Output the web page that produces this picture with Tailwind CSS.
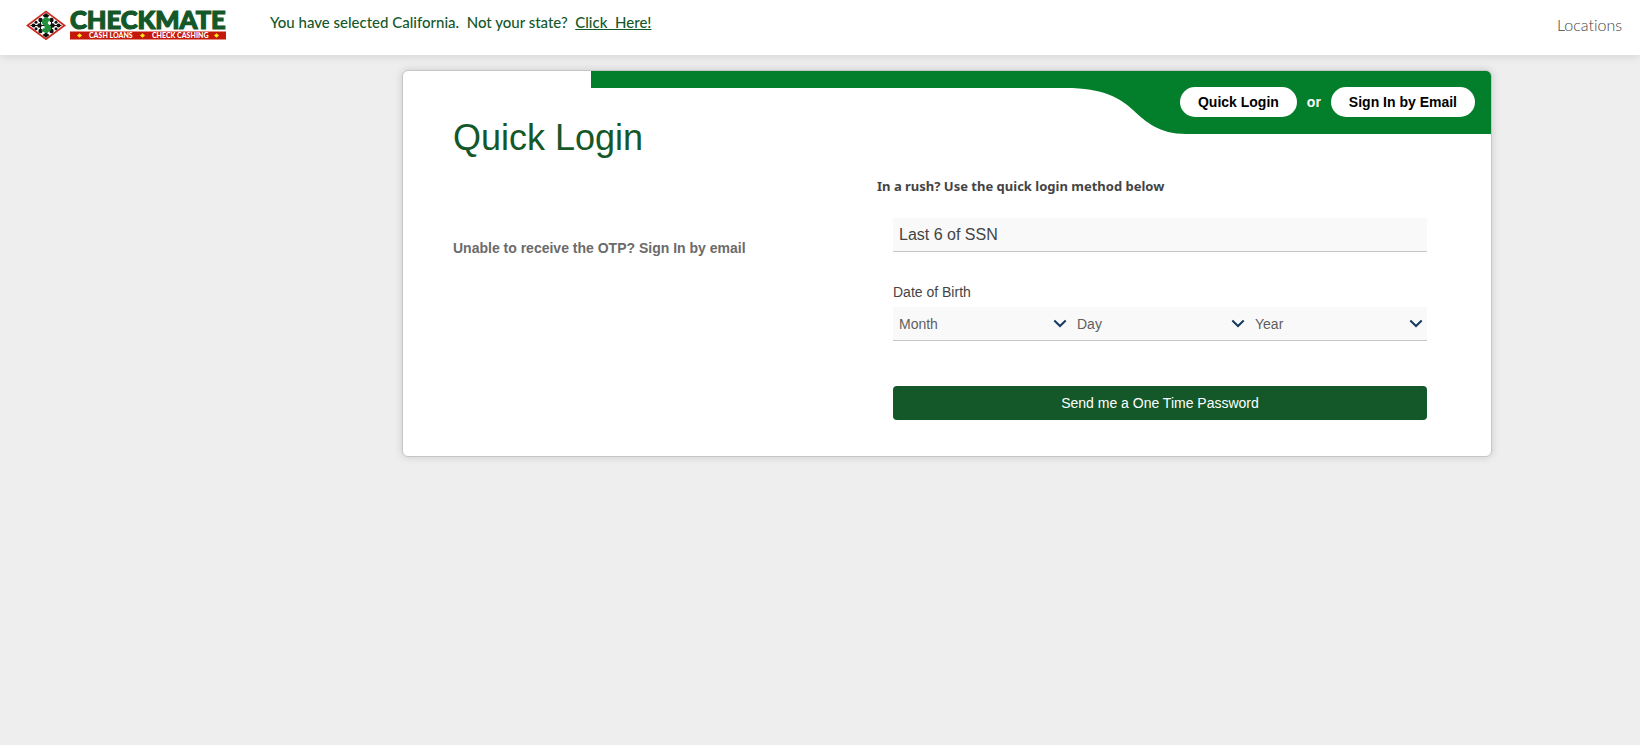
<!DOCTYPE html>
<html lang="en">
<head>
<meta charset="utf-8">
<meta name="viewport" content="width=device-width, initial-scale=1">
<title>Checkmate - Quick Login</title>
<script src="https://cdn.jsdelivr.net/npm/@tailwindcss/browser@4"></script>
</head>
<body class="min-h-screen bg-[#eeeeee] font-['Liberation_Sans',Arial,sans-serif] text-sm text-[#444444]">

<header class="relative flex h-[55px] items-start bg-white pl-6 pr-[18px] shadow-[0_2px_8px_rgba(0,0,0,0.1)] font-[Lato,sans-serif] [font-variant-ligatures:none]">
  <a href="#" aria-label="Checkmate home" class="block">
    <svg class="block h-[46px] w-[208px]" viewBox="24 0 208 46">
      <path d="M46 10.500 66 25.500 46 40.200 26 25.500Z" fill="#cc2a1e"/>
      <path d="M46 12.600 63 25.500 46 38.100 29 25.500Z" fill="#fff"/>
      <g fill="#111">
        <path d="M46 13 49.500 15.700 46 18.400 42.500 15.700Z"/>
        <path d="M46 32.400 49.500 35.100 46 37.800 42.500 35.100Z"/>
        <circle cx="40.500" cy="20" r="2.200"/><circle cx="51.500" cy="20" r="2.200"/>
        <circle cx="36" cy="22.200" r="1.500"/><circle cx="56" cy="22.200" r="1.500"/>
        <circle cx="33.500" cy="25.500" r="2"/><circle cx="58.500" cy="25.500" r="2"/>
        <circle cx="36" cy="28.800" r="1.500"/><circle cx="56" cy="28.800" r="1.500"/>
        <circle cx="39.500" cy="25.500" r="2.300"/><circle cx="52.500" cy="25.500" r="2.300"/>
        <circle cx="40.500" cy="31" r="2.200"/><circle cx="51.500" cy="31" r="2.200"/>
        <path d="M30.500 25h31v1H30.500ZM40 19h1v12h-1ZM51 19h1v12h-1Z"/>
      </g>
      <path d="M49.500 20.800C48 18.800 43.500 18.800 43.500 21.800 43.500 25.500 49.500 24.500 49.500 28 49.500 31.200 44.500 31.200 42.500 29.200M46.200 17V33" fill="none" stroke="#23903c" stroke-width="3.400"/>
      <text x="70" y="28.500" font-family="Lato, sans-serif" font-weight="900" font-size="25.500" fill="#14582a" stroke="#14582a" stroke-width="1.200">CHECKMATE</text>
      <path d="M70 31.500h156v8H70Z" fill="#c41808"/>
      <g fill="#ffe81a">
        <path d="M79.500 33.200 82 35.500 79.500 37.800 77 35.500Z"/>
        <path d="M142.500 33.200 145 35.500 142.500 37.800 140 35.500Z"/>
        <path d="M216.500 33.200 219 35.500 216.500 37.800 214 35.500Z"/>
      </g>
      <g font-family="Lato, sans-serif" font-weight="900" font-size="7" fill="#fff">
        <text x="89" y="38">CASH LOANS</text>
        <text x="152" y="38">CHECK CASHING</text>
      </g>
    </svg>
  </a>
  <p class="ml-[38px] mt-2.5 whitespace-pre text-[15px] leading-6 font-medium text-[#14582a]">You have selected California.  Not your state?  <a href="#" class="underline">Click  Here!</a></p>
  <nav class="ml-auto mt-[13px]"><a href="#" class="text-base leading-6 font-light text-[#444444]">Locations</a></nav>
</header>

<main class="ml-[402px] mr-[148px] mt-[15px] rounded-md border border-[#c6c6c6] bg-white pb-9 shadow-[0_0_8px_rgba(0,0,0,0.15)]">
  <div class="relative flex items-start justify-between overflow-hidden rounded-t-[5px]">
    <svg class="absolute right-0 top-0 h-[63px] w-[900px]" viewBox="0 0 900 63" aria-hidden="true">
      <path d="M0 0H900V63H595C568 63 555 51 542 39S512 17 475 17H0Z" fill="#037f2b"/>
    </svg>
    <h1 class="pl-[50px] pt-[47px] text-4xl leading-10 text-[#14582a]">Quick Login</h1>
    <div class="relative flex items-center pr-4 pt-4 font-bold">
      <button type="button" class="h-[30px] rounded-full bg-white px-[18px] text-black">Quick Login</button>
      <span class="px-2.5 text-white">or</span>
      <button type="button" class="h-[30px] rounded-full bg-white px-[18px] text-black">Sign In by Email</button>
    </div>
  </div>

  <div class="grid grid-cols-[424fr_550fr] pl-[50px] pr-16">
    <p class="pt-20 leading-5 font-bold text-[#6b6b6b]">Unable to receive the OTP? Sign In by email</p>
    <form class="pt-[18px]">
      <p class="font-['Noto_Sans',sans-serif] text-[13px] leading-5 font-bold">In a rush? Use the quick login method below</p>
      <div class="pl-4 pt-[22px]">
        <input type="text" aria-label="Last 6 of SSN" placeholder="Last 6 of SSN" class="block h-[34px] w-full border-b border-[#c6c6c6] bg-[#f9f9f9] px-1.5 text-base placeholder:text-[#444444]">
        <fieldset class="mt-[30px]">
          <legend class="leading-5">Date of Birth</legend>
          <div class="mt-[5px] grid grid-cols-3 border-b border-[#c6c6c6] bg-[#f9f9f9] text-[#5f5f5f]">
            <div class="relative">
              <select aria-label="Month" class="block h-[33px] w-full appearance-none pl-1.5"><option>Month</option></select>
              <svg class="pointer-events-none absolute right-1 top-3 h-2.5 w-3.5" viewBox="0 0 14 10" fill="none" stroke="#163a5f" stroke-width="2"><path d="M1.300 1.500 7 7 12.700 1.500"/></svg>
            </div>
            <div class="relative">
              <select aria-label="Day" class="block h-[33px] w-full appearance-none pl-1.5"><option>Day</option></select>
              <svg class="pointer-events-none absolute right-1 top-3 h-2.5 w-3.5" viewBox="0 0 14 10" fill="none" stroke="#163a5f" stroke-width="2"><path d="M1.300 1.500 7 7 12.700 1.500"/></svg>
            </div>
            <div class="relative">
              <select aria-label="Year" class="block h-[33px] w-full appearance-none pl-1.5"><option>Year</option></select>
              <svg class="pointer-events-none absolute right-1 top-3 h-2.5 w-3.5" viewBox="0 0 14 10" fill="none" stroke="#163a5f" stroke-width="2"><path d="M1.300 1.500 7 7 12.700 1.500"/></svg>
            </div>
          </div>
        </fieldset>
        <button type="submit" class="mt-[45px] block h-[34px] w-full rounded bg-[#14582a] text-white">Send me a One Time Password</button>
      </div>
    </form>
  </div>
</main>
</body>
</html>
